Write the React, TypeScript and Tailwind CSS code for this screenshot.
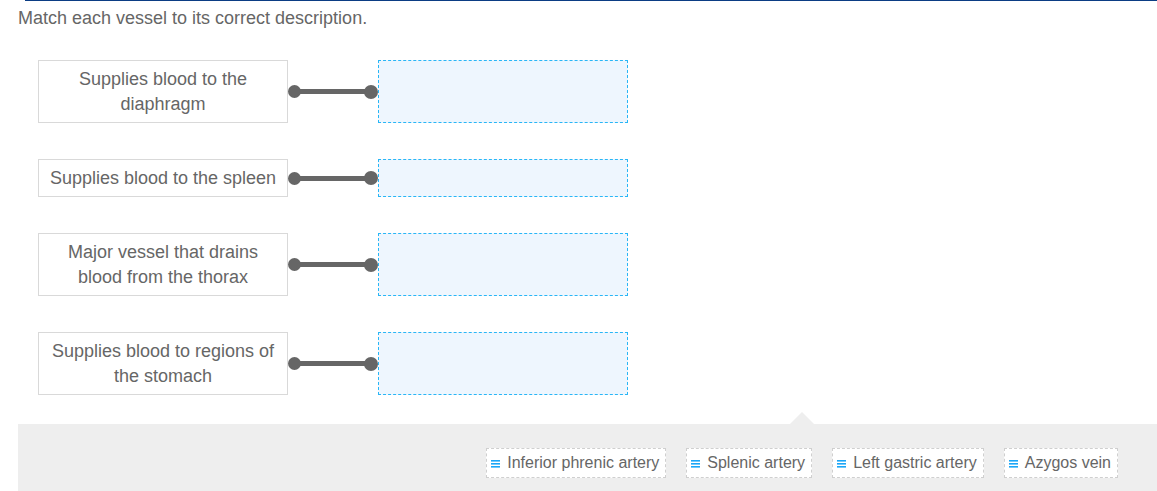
import React from "react";

const PAIRS = [
  { text: "Supplies blood to the diaphragm", tall: true },
  { text: "Supplies blood to the spleen", tall: false },
  { text: "Major vessel that drains blood from the thorax", tall: true },
  { text: "Supplies blood to regions of the stomach", tall: true },
];

const CHOICES = ["Inferior phrenic artery", "Splenic artery", "Left gastric artery", "Azygos vein"];

function Connector() {
  return (
    <div className="relative flex h-[14px] w-[90px] items-center">
      <span className="h-[13px] w-[13px] shrink-0 rounded-full bg-[#666]" />
      <span className="-mx-[2px] h-[5px] flex-1 bg-[#666]" />
      <span className="h-[14px] w-[14px] shrink-0 rounded-full bg-[#666]" />
    </div>
  );
}

function Grip() {
  return (
    <svg width="9" height="9" viewBox="0 0 9 9" aria-hidden="true" className="shrink-0">
      <rect x="0" y="1" width="9" height="1.6" fill="#1aa6f7" />
      <rect x="0" y="4" width="9" height="1.6" fill="#1aa6f7" />
      <rect x="0" y="7" width="9" height="1.6" fill="#1aa6f7" />
    </svg>
  );
}

export default function App() {
  return (
    <div className="h-[491px] w-[1157px] overflow-hidden bg-white font-['Liberation_Sans',Arial,sans-serif] text-[#666]">
      <div className="ml-[25px] h-px bg-[#0b3d84]" />
      <p className="px-[18px] pt-[7px] text-[18px] leading-[20px]">Match each vessel to its correct description.</p>

      <div className="ml-[38px] mt-[32px] flex flex-col gap-[36px]">
        {PAIRS.map((p) => (
          <div key={p.text} className="flex items-center">
            <div
              className={`flex w-[250px] items-center justify-center border border-[#d9d9d9] px-[9px] text-center text-[18px] leading-[25px] ${
                p.tall ? "h-[63px]" : "h-[38px]"
              }`}
            >
              {p.text}
            </div>
            <Connector />
            <div
              className={`w-[250px] border border-dashed border-[#29b6f6] bg-[#eef6fe] ${
                p.tall ? "h-[63px]" : "h-[38px]"
              }`}
            />
          </div>
        ))}
      </div>

      <div className="relative ml-[18px] mt-[29px] bg-[#eeeeee] pb-[14px] pt-[24px]">
        <span className="absolute -top-[12px] left-[772px] h-0 w-0 border-x-[12px] border-b-[12px] border-x-transparent border-b-[#eeeeee]" />
        <div className="flex justify-end gap-[20px] pr-[39px]">
          {CHOICES.map((c) => (
            <div
              key={c}
              className="flex h-[30px] items-center gap-[7px] border border-dashed border-[#cfcfcf] bg-white pl-[4px] pr-[6px] text-[16px] leading-[18px]"
            >
              <Grip />
              <span className="-mt-px">{c}</span>
            </div>
          ))}
        </div>
      </div>
    </div>
  );
}
